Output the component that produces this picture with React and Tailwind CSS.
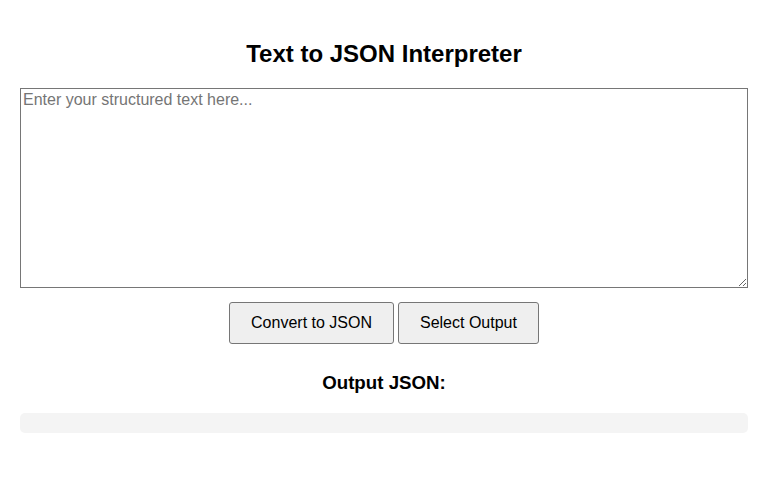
import React, { useState } from "react";

const App = () => {
  const [text, setText] = useState("");
  const [output, setOutput] = useState("");

  return (
    <div className="min-h-screen bg-white p-5 font-['Liberation_Sans',Arial,sans-serif] text-black">
      <h1 className="mt-5 mb-5 text-center text-2xl leading-[28px] font-bold">
        Text to JSON Interpreter
      </h1>

      <textarea
        className="block h-[200px] w-full resize-y border border-[#767676] p-[2px] text-base leading-[18px] placeholder:text-[#757575] focus:outline-none"
        placeholder="Enter your structured text here..."
        value={text}
        onChange={(e) => setText(e.target.value)}
      />

      {/* Action buttons */}
      <div className="mt-[14px] flex justify-center gap-1">
        <button
          className="h-[42px] rounded-[3px] border border-[#767676] bg-[#efefef] px-[21px] text-base"
          onClick={() => setOutput(text)}
        >
          Convert to JSON
        </button>
        <button className="h-[42px] rounded-[3px] border border-[#767676] bg-[#efefef] px-[21px] text-base">
          Select Output
        </button>
      </div>

      <h3 className="mt-[28px] mb-[19px] text-center text-[18.72px] leading-[22px] font-bold">
        Output JSON:
      </h3>

      <pre className="min-h-[20px] rounded-[5px] bg-[#f4f4f4] p-[10px] text-sm">{output}</pre>
    </div>
  );
};

export default App;
